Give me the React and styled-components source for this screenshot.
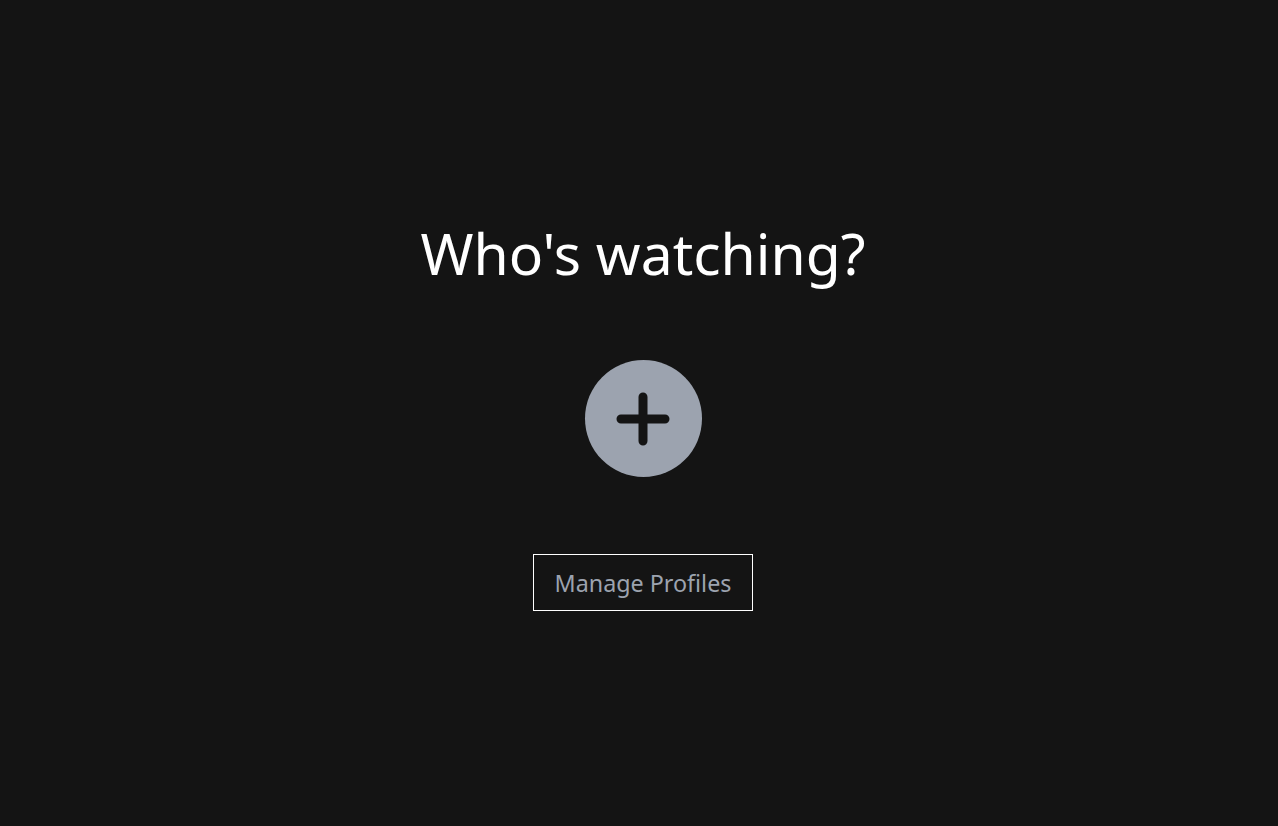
import React from 'react'
import styled, { createGlobalStyle } from 'styled-components'

const GlobalStyle = createGlobalStyle`
  html, body {
    margin: 0;
    padding: 0;
    background: #141414;
  }
  body {
    font-family: "Noto Sans", "Open Sans", sans-serif;
  }
`

const Page = styled.main`
  height: 826px;
  box-sizing: border-box;
  padding: 219px 0 0 8px;
  display: flex;
  flex-direction: column;
  align-items: center;
`

const Title = styled.h1`
  margin: 0;
  color: #ffffff;
  font-size: 57px;
  font-weight: 400;
  line-height: 1.2;
`

const AddProfile = styled.button`
  margin-top: 73px;
  width: 117px;
  height: 117px;
  border: none;
  border-radius: 50%;
  background: #9ca3af;
  display: flex;
  align-items: center;
  justify-content: center;
  padding: 0;
  cursor: pointer;
`

const ManageButton = styled.button`
  margin-top: 77px;
  width: 220px;
  height: 57px;
  background: transparent;
  border: 1px solid #ffffff;
  color: #9ca3af;
  font-family: inherit;
  font-size: 23.3px;
  cursor: pointer;
`

const PlusIcon = () => (
  <svg width='54' height='54' viewBox='0 0 54 54' fill='none'>
    <path d='M5 27h44M27 5v44' stroke='#141414' strokeWidth='9' strokeLinecap='round' />
  </svg>
)

const App = () => (
  <>
    <GlobalStyle />
    <Page>
      <Title>Who's watching?</Title>
      <AddProfile aria-label='Add profile'>
        <PlusIcon />
      </AddProfile>
      <ManageButton>Manage Profiles</ManageButton>
    </Page>
  </>
)

export default App
